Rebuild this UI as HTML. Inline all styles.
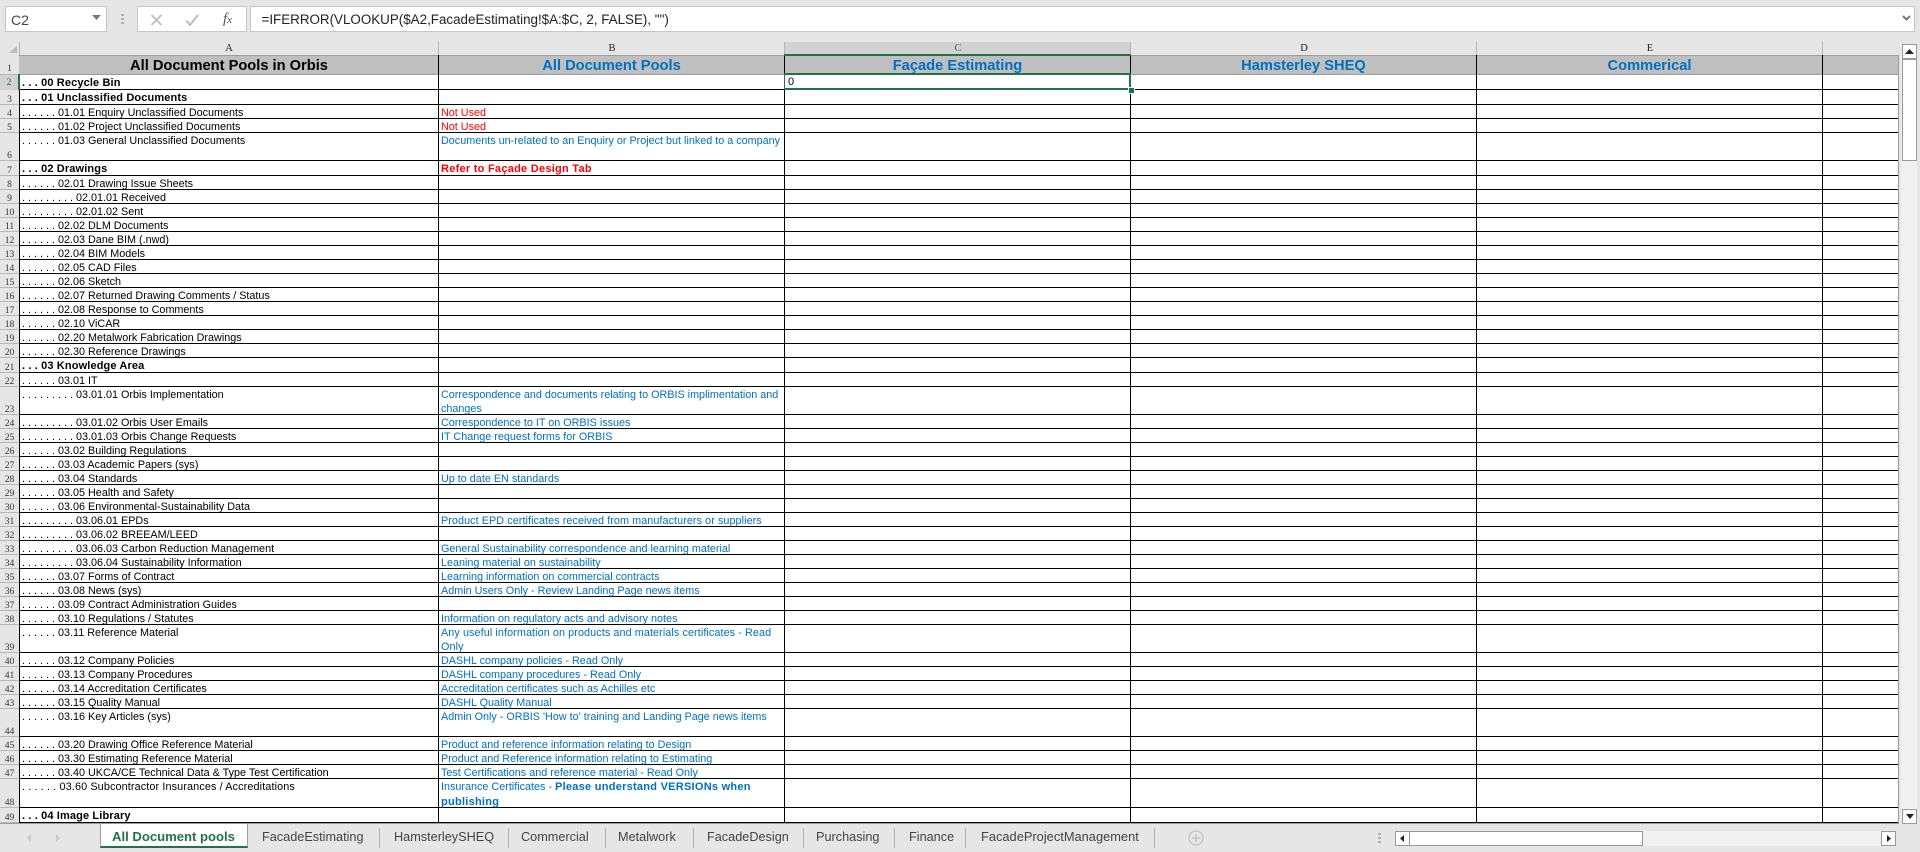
<!DOCTYPE html>
<html><head><meta charset="utf-8"><title>Excel</title>
<style>
html,body{margin:0;padding:0;width:1920px;height:852px;overflow:hidden;background:#e6e6e6;font-family:"Liberation Sans",Arial,sans-serif}
.p{position:absolute}
.box{position:absolute;background:#fff;border:1px solid #c6c6c6;box-sizing:border-box}
#rows{position:absolute;left:0;top:75px;width:1898px;height:748px;overflow:hidden}
.r{position:relative;box-sizing:border-box;border-bottom:1px solid #000;background:#fff;font-size:10.8px;line-height:14px;color:#000;white-space:pre}
.h14{height:14px}.h15{height:15px;line-height:15px}.h28{height:28px}.h29{height:29px;line-height:15px}
.r i{position:absolute;left:0;width:19px;bottom:-1px;height:12px;padding-top:2px;background:transparent;font:normal 9.6px/14px "Liberation Serif",serif;color:#333;text-align:center;z-index:1;letter-spacing:0}
.r s{position:absolute;left:0;top:0;bottom:-1px;width:19px;background:#e6e6e6;border-bottom:1px solid #b8b8b8;box-sizing:border-box;text-decoration:none}
.r u{position:absolute;left:22px;top:1px;text-decoration:none}
.r em{position:absolute;left:441px;top:1px;font-style:normal;color:#0070c0}
.red{color:#f00!important}
.bd{font-weight:bold;font-size:11px;letter-spacing:.13px}
.r em.bd,.r em .bd{letter-spacing:.26px;font-weight:bold;font-size:11px}
.v{position:absolute;top:55px;height:768px;width:1px;background:#000}
.ch{position:absolute;top:42px;height:13px;font:10.5px/13px "Liberation Serif",serif;color:#222;text-align:center;width:346px}
.cs{position:absolute;top:42px;height:13px;width:1px;background:#b4b4b4}
.hd{position:absolute;top:57px;height:18px;line-height:19px;font-size:14.67px;font-weight:bold;color:#0070c0;text-align:center;white-space:pre}
.tab{position:absolute;top:837px;transform:translateY(-50%);font-size:12.7px;line-height:16px;color:#444;white-space:pre}
.sep{position:absolute;top:828px;height:20px;width:1px;background:#b0b0b0}
.sb{position:absolute;background:#fff;border:1px solid #999;box-sizing:border-box}
</style></head><body>

<!-- formula bar -->
<div class="box" style="left:5px;top:6px;width:102px;height:26px"></div>
<div class="p" style="left:11px;top:11px;font-size:14px;line-height:18px;color:#444">C2</div>
<svg class="p" style="left:92px;top:15px" width="9" height="6"><polygon points="0,0 9,0 4.5,5" fill="#777"/></svg>
<div class="p" style="left:121px;top:14px;width:3px;height:2px;background:#b0b0b0"></div>
<div class="p" style="left:121px;top:18px;width:3px;height:2px;background:#b0b0b0"></div>
<div class="p" style="left:121px;top:22px;width:3px;height:2px;background:#b0b0b0"></div>
<div class="box" style="left:137px;top:6px;width:110px;height:26px"></div>
<svg class="p" style="left:150px;top:14px" width="13" height="12"><path d="M1.5 1 L11.5 11 M11.5 1 L1.5 11" stroke="#bdbdbd" stroke-width="1.8" fill="none"/></svg>
<svg class="p" style="left:185px;top:14px" width="14" height="12"><path d="M1 6.5 L5 11 L13 1" stroke="#bdbdbd" stroke-width="1.9" fill="none"/></svg>
<div class="p" style="left:223px;top:10px;font:italic 15px/18px 'Liberation Serif',serif;color:#555">f<span style="font-size:11px">x</span></div>
<div class="box" style="left:250px;top:6px;width:1665px;height:26px"></div>
<div class="p" style="left:261.5px;top:11px;font-size:13.4px;line-height:18px;color:#222;white-space:pre">=IFERROR(VLOOKUP($A2,FacadeEstimating!$A:$C, 2, FALSE), "")</div>
<svg class="p" style="left:1902px;top:15px" width="9" height="7"><path d="M1 1 L4.5 4.5 L8 1" stroke="#777" stroke-width="2" fill="none"/></svg>

<!-- column headers -->
<div class="p" style="left:0;top:42px;width:1898px;height:13px;background:#e6e6e6"></div>
<svg class="p" style="left:9px;top:46px" width="9" height="8"><polygon points="8,0 8,7 0,7" fill="#bcbcbc"/></svg>
<div class="cs" style="left:19px"></div>
<div class="p" style="left:784px;top:42px;width:347px;height:13px;background:#d2d2d2"></div>
<div class="ch" style="left:20px;width:418px">A</div>
<div class="ch" style="left:439px">B</div>
<div class="ch" style="left:785px;color:#217346">C</div>
<div class="ch" style="left:1131px">D</div>
<div class="ch" style="left:1477px">E</div>
<div class="cs" style="left:438px"></div><div class="cs" style="left:784px"></div><div class="cs" style="left:1130px"></div><div class="cs" style="left:1476px"></div><div class="cs" style="left:1822px"></div>

<!-- row 1 -->
<div class="p" style="left:19px;top:55px;width:1879px;height:20px;background:#bfbfbf;border-top:1px solid #9c9c9c;border-bottom:1px solid #9c9c9c;box-sizing:border-box"></div>
<div class="p" style="left:0;top:55px;width:19px;height:20px;background:#e6e6e6;border-bottom:1px solid #b8b8b8;box-sizing:border-box;font:9.6px/14px 'Liberation Serif',serif;color:#333;text-align:center;padding-top:7px">1</div>
<div class="hd" style="left:20px;width:418px;color:#000">All Document Pools in Orbis</div>
<div class="hd" style="left:439px;width:345px">All Document Pools</div>
<div class="hd" style="left:785px;width:345px">Façade Estimating</div>
<div class="hd" style="left:1131px;width:345px">Hamsterley SHEQ</div>
<div class="hd" style="left:1477px;width:345px">Commerical</div>

<div id="rows">
<div class="r h15 bd"><s></s><u>. . . 00 Recycle Bin</u></div>
<div class="r h15 bd"><s></s><i>3</i><u>. . . 01 Unclassified Documents</u></div>
<div class="r h14"><s></s><i>4</i><u>. . . . . . 01.01 Enquiry Unclassified Documents</u><em class="red">Not Used</em></div>
<div class="r h14"><s></s><i>5</i><u>. . . . . . 01.02 Project Unclassified Documents</u><em class="red">Not Used</em></div>
<div class="r h28"><s></s><i>6</i><u>. . . . . . 01.03 General Unclassified Documents</u><em>Documents un-related to an Enquiry or Project but linked to a company</em></div>
<div class="r h15 bd"><s></s><i>7</i><u>. . . 02 Drawings</u><em class="red bd">Refer to Façade Design Tab</em></div>
<div class="r h14"><s></s><i>8</i><u>. . . . . . 02.01 Drawing Issue Sheets</u></div>
<div class="r h14"><s></s><i>9</i><u>. . . . . . . . . 02.01.01 Received</u></div>
<div class="r h14"><s></s><i>10</i><u>. . . . . . . . . 02.01.02 Sent</u></div>
<div class="r h14"><s></s><i>11</i><u>. . . . . . 02.02 DLM Documents</u></div>
<div class="r h14"><s></s><i>12</i><u>. . . . . . 02.03 Dane BIM (.nwd)</u></div>
<div class="r h14"><s></s><i>13</i><u>. . . . . . 02.04 BIM Models</u></div>
<div class="r h14"><s></s><i>14</i><u>. . . . . . 02.05 CAD Files</u></div>
<div class="r h14"><s></s><i>15</i><u>. . . . . . 02.06 Sketch</u></div>
<div class="r h14"><s></s><i>16</i><u>. . . . . . 02.07 Returned Drawing Comments / Status</u></div>
<div class="r h14"><s></s><i>17</i><u>. . . . . . 02.08 Response to Comments</u></div>
<div class="r h14"><s></s><i>18</i><u>. . . . . . 02.10 ViCAR</u></div>
<div class="r h14"><s></s><i>19</i><u>. . . . . . 02.20 Metalwork Fabrication Drawings</u></div>
<div class="r h14"><s></s><i>20</i><u>. . . . . . 02.30 Reference Drawings</u></div>
<div class="r h15 bd"><s></s><i>21</i><u>. . . 03 Knowledge Area</u></div>
<div class="r h14"><s></s><i>22</i><u>. . . . . . 03.01 IT</u></div>
<div class="r h28"><s></s><i>23</i><u>. . . . . . . . . 03.01.01 Orbis Implementation</u><em>Correspondence and documents relating to ORBIS implimentation and
changes</em></div>
<div class="r h14"><s></s><i>24</i><u>. . . . . . . . . 03.01.02 Orbis User Emails</u><em>Correspondence to IT on ORBIS issues</em></div>
<div class="r h14"><s></s><i>25</i><u>. . . . . . . . . 03.01.03 Orbis Change Requests</u><em>IT Change request forms for ORBIS</em></div>
<div class="r h14"><s></s><i>26</i><u>. . . . . . 03.02 Building Regulations</u></div>
<div class="r h14"><s></s><i>27</i><u>. . . . . . 03.03 Academic Papers (sys)</u></div>
<div class="r h14"><s></s><i>28</i><u>. . . . . . 03.04 Standards</u><em>Up to date EN standards</em></div>
<div class="r h14"><s></s><i>29</i><u>. . . . . . 03.05 Health and Safety</u></div>
<div class="r h14"><s></s><i>30</i><u>. . . . . . 03.06 Environmental-Sustainability Data</u></div>
<div class="r h14"><s></s><i>31</i><u>. . . . . . . . . 03.06.01 EPDs</u><em style="letter-spacing:.07px">Product EPD certificates received from manufacturers or suppliers</em></div>
<div class="r h14"><s></s><i>32</i><u>. . . . . . . . . 03.06.02 BREEAM/LEED</u></div>
<div class="r h14"><s></s><i>33</i><u>. . . . . . . . . 03.06.03 Carbon Reduction Management</u><em>General Sustainability correspondence and learning material</em></div>
<div class="r h14"><s></s><i>34</i><u>. . . . . . . . . 03.06.04 Sustainability Information</u><em>Leaning material on sustainability</em></div>
<div class="r h14"><s></s><i>35</i><u>. . . . . . 03.07 Forms of Contract</u><em>Learning information on commercial contracts</em></div>
<div class="r h14"><s></s><i>36</i><u>. . . . . . 03.08 News (sys)</u><em>Admin Users Only - Review Landing Page news items</em></div>
<div class="r h14"><s></s><i>37</i><u>. . . . . . 03.09 Contract Administration Guides</u></div>
<div class="r h14"><s></s><i>38</i><u>. . . . . . 03.10 Regulations / Statutes</u><em>Information on regulatory acts and advisory notes</em></div>
<div class="r h28"><s></s><i>39</i><u>. . . . . . 03.11 Reference Material</u><em style="letter-spacing:.09px">Any useful information on products and materials certificates - Read
Only</em></div>
<div class="r h14"><s></s><i>40</i><u>. . . . . . 03.12 Company Policies</u><em>DASHL company policies - Read Only</em></div>
<div class="r h14"><s></s><i>41</i><u>. . . . . . 03.13 Company Procedures</u><em>DASHL company procedures - Read Only</em></div>
<div class="r h14"><s></s><i>42</i><u>. . . . . . 03.14 Accreditation Certificates</u><em>Accreditation certificates such as Achilles etc</em></div>
<div class="r h14"><s></s><i>43</i><u>. . . . . . 03.15 Quality Manual</u><em>DASHL Quality Manual</em></div>
<div class="r h28"><s></s><i>44</i><u>. . . . . . 03.16 Key Articles (sys)</u><em>Admin Only - ORBIS 'How to' training and Landing Page news items</em></div>
<div class="r h14"><s></s><i>45</i><u>. . . . . . 03.20 Drawing Office Reference Material</u><em>Product and reference information relating to Design</em></div>
<div class="r h14"><s></s><i>46</i><u>. . . . . . 03.30 Estimating Reference Material</u><em>Product and Reference information relating to Estimating</em></div>
<div class="r h14"><s></s><i>47</i><u>. . . . . . 03.40 UKCA/CE Technical Data &amp; Type Test Certification</u><em>Test Certifications and reference material - Read Only</em></div>
<div class="r h29"><s></s><i>48</i><u style="letter-spacing:.13px">. . . . . . 03.60 Subcontractor Insurances / Accreditations</u><em>Insurance Certificates - <span class="bd">Please understand VERSIONs when
publishing</span></em></div>
<div class="r h15 bd"><s></s><i>49</i><u>. . . 04 Image Library</u></div>
</div>

<!-- vertical grid lines -->
<div class="v" style="left:19px;top:75px;height:748px"></div>
<div class="v" style="left:438px"></div><div class="v" style="left:784px"></div><div class="v" style="left:1130px"></div><div class="v" style="left:1476px"></div><div class="v" style="left:1822px"></div>
<div class="p" style="left:1898px;top:55px;width:1px;height:769px;background:#9c9c9c"></div>
<div class="p" style="left:0;top:823px;width:1899px;height:1px;background:#9c9c9c"></div>

<!-- selection -->
<div class="p" style="left:784px;top:54px;width:347px;height:2px;background:#217346"></div>
<div class="p" style="left:784px;top:73px;width:347px;height:1px;background:#217346"></div>
<div class="p" style="left:784px;top:74px;width:347px;height:16px;border:1px solid #217346;box-sizing:border-box;border-width:1px 2px 2px 1px"></div>
<div class="p" style="left:1128px;top:87px;background:#217346;border:1px solid #fff;box-sizing:border-box;width:7px;height:7px"></div>
<div class="p" style="left:788px;top:75px;font-size:11px;line-height:14px;color:#000">0</div>
<div class="p" style="left:0;top:75px;width:18px;height:15px;background:#d2d2d2;font:9.6px/14px 'Liberation Serif',serif;color:#217346;text-align:center;padding-top:1px;box-sizing:border-box">2</div>
<div class="p" style="left:18px;top:74px;width:2px;height:16px;background:#217346"></div>

<!-- vertical scrollbar -->
<div class="p" style="left:1901px;top:44px;width:16px;height:780px;background:#f0f0f0"></div>
<div class="sb" style="left:1902px;top:44px;width:15px;height:15px"></div>
<svg class="p" style="left:1905px;top:49px" width="9" height="5"><polygon points="4.5,0 9,5 0,5" fill="#222"/></svg>
<div class="sb" style="left:1902px;top:59px;width:15px;height:102px"></div>
<div class="sb" style="left:1902px;top:809px;width:15px;height:15px"></div>
<svg class="p" style="left:1906px;top:814px" width="8" height="5"><polygon points="0,0 8,0 4,5" fill="#222"/></svg>

<!-- tab bar -->
<svg class="p" style="left:27px;top:834px" width="5" height="8"><polygon points="4,0 4,8 0,4" fill="#c8c8c8"/></svg>
<svg class="p" style="left:56px;top:834px" width="5" height="8"><polygon points="0,0 0,8 4,4" fill="#c8c8c8"/></svg>
<div class="p" style="left:100px;top:824px;width:148px;height:24px;background:#fff;border-left:1px solid #9c9c9c;border-right:1px solid #9c9c9c;border-bottom:2px solid #217346;box-sizing:border-box"></div>
<div class="tab" style="left:112px;font-size:13.1px;font-weight:bold;color:#217346">All Document pools</div>
<div class="tab" style="left:262px">FacadeEstimating</div><div class="sep" style="left:379px"></div>
<div class="tab" style="left:394px">HamsterleySHEQ</div><div class="sep" style="left:508px"></div>
<div class="tab" style="left:521px">Commercial</div><div class="sep" style="left:605px"></div>
<div class="tab" style="left:618px">Metalwork</div><div class="sep" style="left:693px"></div>
<div class="tab" style="left:707px">FacadeDesign</div><div class="sep" style="left:803px"></div>
<div class="tab" style="left:816px">Purchasing</div><div class="sep" style="left:894px"></div>
<div class="tab" style="left:909px">Finance</div><div class="sep" style="left:965px"></div>
<div class="tab" style="left:981px;font-size:12.85px">FacadeProjectManagement</div><div class="sep" style="left:1154px"></div>
<svg class="p" style="left:1188px;top:830px" width="16" height="16"><circle cx="8" cy="8" r="7" fill="none" stroke="#c2c2c2" stroke-width="1.2"/><path d="M8 4 V12 M4 8 H12" stroke="#c2c2c2" stroke-width="1.4"/></svg>
<div class="p" style="left:1378px;top:833px;width:3px;height:2px;background:#b0b0b0"></div>
<div class="p" style="left:1378px;top:837px;width:3px;height:2px;background:#b0b0b0"></div>
<div class="p" style="left:1378px;top:841px;width:3px;height:2px;background:#b0b0b0"></div>

<!-- horizontal scrollbar -->
<div class="p" style="left:1395px;top:831px;width:501px;height:15px;background:#f0f0f0"></div>
<div class="sb" style="left:1395px;top:831px;width:15px;height:15px"></div>
<svg class="p" style="left:1400px;top:835px" width="4" height="7"><polygon points="4,0 4,7 0,3.5" fill="#222"/></svg>
<div class="sb" style="left:1409px;top:831px;width:234px;height:15px"></div>
<div class="sb" style="left:1881px;top:831px;width:15px;height:15px"></div>
<svg class="p" style="left:1887px;top:835px" width="4" height="7"><polygon points="0,0 0,7 4,3.5" fill="#222"/></svg>
</body></html>
